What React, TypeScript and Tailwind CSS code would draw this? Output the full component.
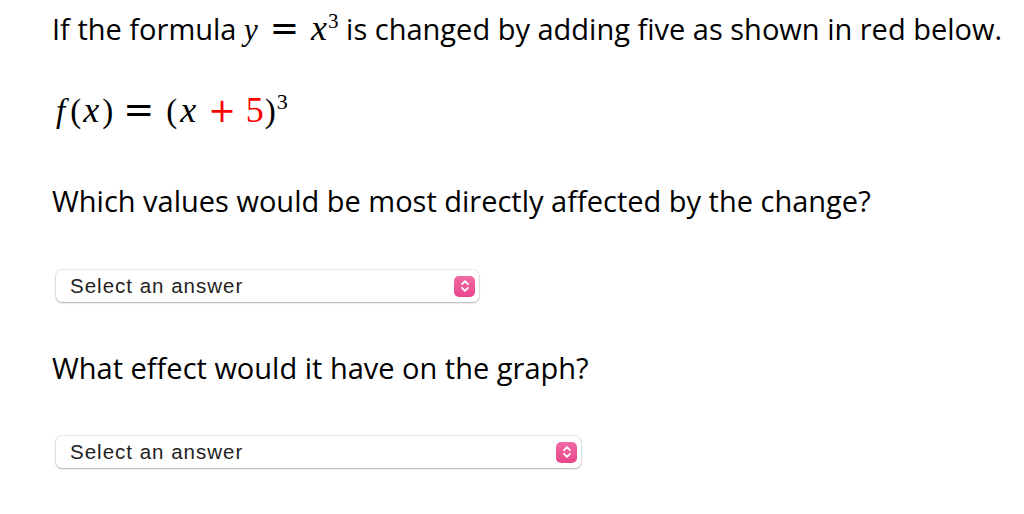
import React from "react";

const M = ({ children, className = "" }: { children: React.ReactNode; className?: string }) => (
  <span className={className} style={{ fontFamily: '"Liberation Serif", serif' }}>{children}</span>
);
const O = ({ children, className = "" }: { children: React.ReactNode; className?: string }) => (
  <span className={className} style={{ fontFamily: '"DejaVu Sans", sans-serif' }}>{children}</span>
);

function Chev() {
  return (
    <span className="flex h-[21px] w-[21px] items-center justify-center rounded-[5px] bg-gradient-to-b from-[#f06aa4] to-[#e8458c]">
      <svg width="10" height="14" viewBox="0 0 10 14" fill="none" stroke="white" strokeWidth="1.8" strokeLinecap="round" strokeLinejoin="round">
        <path d="M2 5.2 L5 2.2 L8 5.2" />
        <path d="M2 8.8 L5 11.8 L8 8.8" />
      </svg>
    </span>
  );
}

function Select({ w }: { w: string }) {
  return (
    <div className={`${w} ml-[56px] flex h-[32px] items-center justify-between rounded-[6px] bg-white pl-[14px] pr-[4px] shadow-[0_0_0_1px_rgba(0,0,0,0.07),0_1px_2px_rgba(0,0,0,0.25)]`}>
      <span className="text-[20.5px] tracking-[1px] text-[#222]" style={{ fontFamily: '"Liberation Sans", Arial, sans-serif' }}>Select an answer</span>
      <Chev />
    </div>
  );
}

export default function App() {
  return (
    <div className="h-[514px] w-[1024px] bg-white text-black" style={{ fontFamily: '"Open Sans", sans-serif' }}>
      <div className="flex items-baseline whitespace-pre pl-[52px] pt-[8px] text-[29px] leading-[40px]">
        <span>If the formula </span>
        <M className="italic text-[31px]">y</M>
        <O className="ml-[12px] text-[35px]">=</O>
        <M className="ml-[12px] italic text-[36px]">x</M>
        <M className="relative -top-[12px] ml-[1px] text-[21px]">3</M>
        <span> is changed by adding five as shown in red below.</span>
      </div>
      <div className="flex items-baseline whitespace-pre pl-[52px] pt-[37px] text-[33px] leading-[40px]">
        <M className="ml-[4px] italic">f</M>
        <M className="ml-[5px]">(</M>
        <M className="ml-[2px] italic text-[36px]">x</M>
        <M className="ml-[3px]">)</M>
        <O className="ml-[10px] text-[37px]">=</O>
        <M className="ml-[12px]">(</M>
        <M className="ml-[3px] italic text-[36px]">x</M>
        <O className="ml-[12px] text-[33px] text-[#ff0000]">+</O>
        <M className="ml-[10px] text-[36px] text-[#ff0000]">5</M>
        <M className="ml-[1px]">)</M>
        <M className="relative -top-[13px] ml-[1px] text-[22px]">3</M>
      </div>
      <div className="pl-[52px] pt-[46px] text-[29px] leading-[40px]">Which values would be most directly affected by the change?</div>
      <div className="pt-[49px]"><Select w="w-[423px]" /></div>
      <div className="pl-[52px] pt-[46px] text-[29px] leading-[40px]">What effect would it have on the graph?</div>
      <div className="pt-[48px]"><Select w="w-[525px]" /></div>
    </div>
  );
}
